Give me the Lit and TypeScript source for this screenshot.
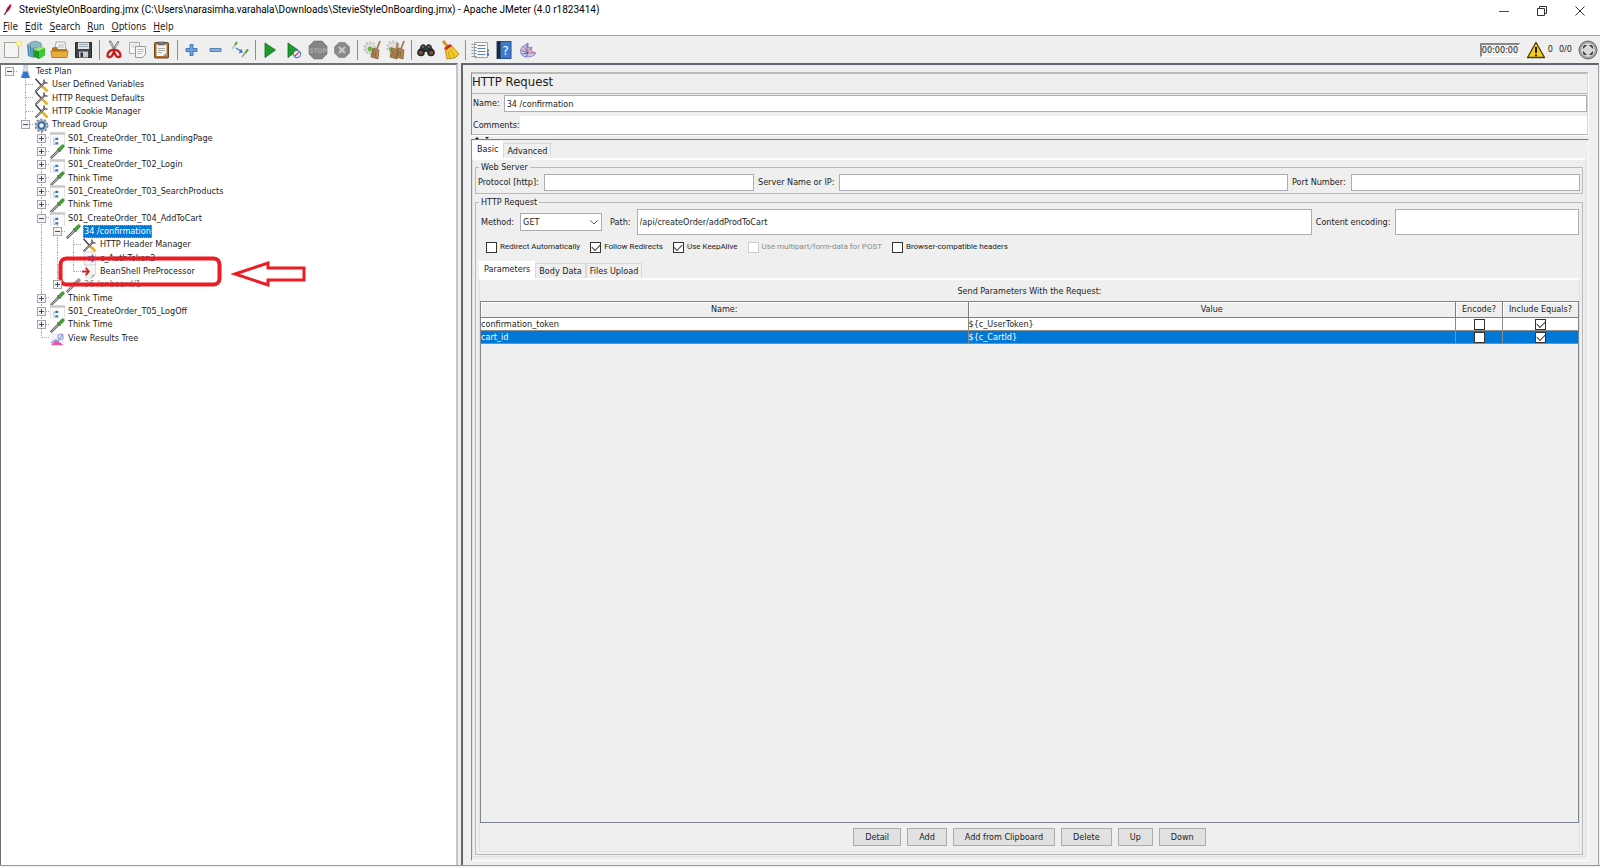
import { LitElement, html, css, svg, nothing } from "lit";
import { customElement, property } from "lit/decorators.js";
import { classMap } from "lit/directives/class-map.js";

const ICONS: Record<string, unknown> = {
  new: svg`<rect x="2.500" y="2.500" width="14" height="15" fill="#f4f4f2" stroke="#a3a3a0"/><circle cx="17" cy="3.500" r="3" fill="#f6e96a"/><circle cx="17" cy="3.500" r="1.300" fill="#fff"/>`,
  templates: svg`<path d="M1 4l6-3 7 1 3 4-8 3z" fill="#a9c8d2"/><path d="M1 4l1 12 6 2V8z" fill="#3f86a8"/><path d="M4 3l5-2 6 2v5H5z" fill="#8fb7c2" stroke="#5b8595" stroke-width=".6"/><path d="M3 5l1 11M6 6v11" stroke="#9fd0e0" stroke-width=".8"/><path d="M8 10l5-3 6 1v7l-6 4-5-2z" fill="#1f9a25"/><path d="M8 10l5-3 6 1-6 3z" fill="#a4ec70"/><path d="M13 11l6-3v7l-6 4z" fill="#3bc93b"/>`,
  open: svg`<path d="M6 2h9l1 8H5z" fill="#f5f5f5" stroke="#9a9a9a" stroke-width=".8"/><path d="M8 5h6M8 7h6" stroke="#bbb"/><path d="M2 8l2-1h3l1 2h9v8H2z" fill="#b5791c"/><path d="M1 11h17l-1 6.500H2z" fill="#e9ad3d" stroke="#a86f17" stroke-width=".8"/>`,
  save: svg`<path d="M1.500 2.500h16v15h-16z" fill="#3f454b" stroke="#24282c"/><rect x="4" y="2.500" width="11" height="6.500" fill="#dfe7ee"/><path d="M5 4.500h9M5 6.500h9" stroke="#8e98a2" stroke-width=".8"/><rect x="5" y="11.500" width="9" height="6" fill="#c9ced2"/><rect x="6.500" y="12.500" width="2.500" height="4.500" fill="#2b2f33"/>`,
  cut: svg`<path d="M5 1l5 9 1-1L7 1zM14 1L9 9l1 1 5-8z" fill="#d9d9d9" stroke="#707070" stroke-width=".8"/><path d="M9 10c-3 0-6 3-5.500 6 1 2 4 1 5-1l1.500-3 1.500 3c1 2 4 3 5 1 .5-3-2.500-6-5.500-6z" fill="none" stroke="#c81d1d" stroke-width="2.400"/>`,
  copy: svg`<path d="M1.500 2.500h10v11h-10z" fill="#f6f6f4" stroke="#aaa"/><path d="M3.500 5h6M3.500 7h6" stroke="#ccc"/><path d="M7.500 6.500h10v8l-3 3h-7z" fill="#f4f4f2" stroke="#999"/><path d="M9.500 9.500h6M9.500 11.500h6M9.500 13.500h4" stroke="#bbb"/>`,
  paste: svg`<rect x="2.500" y="2.500" width="14" height="15.500" rx="1" fill="#a8702a" stroke="#6d4414"/><rect x="4.500" y="4.500" width="10" height="11.500" fill="#f5f5f2"/><path d="M6 8.500h7M6 10.500h7M6 12.500h4" stroke="#a9a9a9"/><path d="M6.500 2h6v3h-6z" fill="#7d7d7d" stroke="#4f4f4f" stroke-width=".6"/><path d="M11 16l3.500-3.500V16z" fill="#999"/>`,
  plus: svg`<path d="M8 4.500h3v4h4v3h-4v4H8v-4H4v-3h4z" fill="#6ba0d8" stroke="#3c73b4" stroke-width=".9"/>`,
  minus: svg`<path d="M4 8.500h11v3H4z" fill="#84afdd" stroke="#4c7fba" stroke-width=".9"/>`,
  toggle: svg`<path d="M2 9l3-4" stroke="#b9bdb9" stroke-width="1.600"/><path d="M5 5l2-3" stroke="#58a348" stroke-width="2.200"/><path d="M12 17l3-4" stroke="#999f99" stroke-width="1.600"/><path d="M15 13l3-3.500" stroke="#58a348" stroke-width="2.200"/><path d="M6 8l6 4m-3 .7l3-.6-1-3" fill="none" stroke="#3e74c5" stroke-width="1.200"/>`,
  run: svg`<path d="M5 3l10.500 7L5 17.500z" fill="#1f9b2d" stroke="#0d6f1b" stroke-width=".8"/>`,
  runNow: svg`<path d="M4 3l10 7-10 7.500z" fill="#1f9b2d" stroke="#0d6f1b" stroke-width=".8"/><circle cx="13" cy="14" r="3.600" fill="#eef3fa" stroke="#4b84c9" stroke-width="1.200"/><path d="M10.800 16.200l4.400-4.400" stroke="#d22" stroke-width="1.200"/>`,
  stop: svg`<path d="M6 1h8l5 5v8l-5 5H6l-5-5V6z" fill="#848484" stroke="#6f6f6f" stroke-width=".6"/><text x="10" y="12.500" text-anchor="middle" font-size="6.500" font-weight="700" fill="#a9a9a9">STOP</text>`,
  shutdown: svg`<path d="M7 2.500h6l4.500 4.500v6L13 17.500H7L2.500 13V7z" fill="#8a8a8a" stroke="#767676" stroke-width=".6"/><path d="M7 7l6 6M13 7l-6 6" stroke="#c9c9c9" stroke-width="2"/>`,
  clear: svg`<circle cx="8" cy="8" r="5.500" fill="#dedede" stroke="#c4c4c4" stroke-dasharray="2 1.500" stroke-width="2.400"/><circle cx="8" cy="9" r="2.400" fill="#67bd2e"/><path d="M18 1l-3 8" stroke="#a77b47" stroke-width="1.800"/><path d="M11 8l6 2-1 9-7-2z" fill="#b08552" stroke="#7b5730" stroke-width=".7"/><path d="M12 10l-1 6M14 11l-1 6" stroke="#7b5730" stroke-width=".6"/>`,
  clearAll: svg`<circle cx="7" cy="7" r="5.500" fill="#dedede" stroke="#c4c4c4" stroke-dasharray="2 1.500" stroke-width="2.400"/><circle cx="5" cy="9" r="2" fill="#67bd2e"/><path d="M12 3l-2 7M18 1l-3 8" stroke="#a77b47" stroke-width="1.800"/><path d="M6 8l6 2-1 9-7-2zM12 8l6 2-1 9-7-2z" fill="#b08552" stroke="#7b5730" stroke-width=".7"/><path d="M7 10l-1 6M9 11l-1 6M13 10l-1 6M15 11l-1 6" stroke="#7b5730" stroke-width=".6"/>`,
  find: svg`<path d="M5 5l3-1 2 2 2-2 3 1 3 7H2z" fill="#33373a"/><circle cx="5" cy="12.500" r="3.800" fill="#24272a"/><circle cx="15" cy="12.500" r="3.800" fill="#24272a"/><circle cx="4.800" cy="12.800" r="2" fill="#8a4b34"/><circle cx="15.200" cy="12.800" r="2" fill="#8a4b34"/><path d="M6 7h2M12 7h2" stroke="#888"/>`,
  broom: svg`<path d="M3 1l5 6" stroke="#d6932a" stroke-width="2.800"/><path d="M5 9l6-4 8 9-4 4-8 1z" fill="#f0c92b" stroke="#a77d12" stroke-width=".8"/><path d="M4 8l6-4 2 2-6 4z" fill="#cf2b20"/><path d="M8 11l2 7M10 9l5 8" stroke="#b78f1a" stroke-width=".7"/>`,
  functions: svg`<path d="M4.500 2.500h13v15h-13z" fill="#fafafa" stroke="#a2a2a2"/><path d="M7.500 5.500h8M7.500 8.500h8M7.500 11.500h8M7.500 14.500h8" stroke="#5c86b9" stroke-width="1.200"/><path d="M1.500 4.500h5M1.500 7.500h5M1.500 10.500h5M1.500 13.500h5M1.500 16.500h5" stroke="#8a8a8a" stroke-dasharray="2 1"/><path d="M18 9v3" stroke="#3a9f3a" stroke-width="1.500"/><path d="M18 13v3" stroke="#2a5fc2" stroke-width="1.500"/>`,
  help: svg`<rect x="3" y="1.500" width="14" height="17" fill="#3c7bd0" stroke="#27518e"/><rect x="3" y="1.500" width="3.500" height="17" fill="#23272f"/><text x="11.500" y="15" text-anchor="middle" font-size="13" fill="#fff">?</text>`,
  feather: svg`<path d="M3 9c-2 4 1 8 6 8 4 0 7-1 9-4l-5-2 1-4-4 1V3L6 6c-2 0-2 1-3 3z" fill="#c3cbea" stroke="#6a78c0" stroke-width=".8"/><path d="M5 6l5 7M3 10l7 3M17 13l-7 0M13 8l-4 5" stroke="#d25b63" stroke-width=".9"/><path d="M9 4v9M4 14l6-1M8 17l2-4" stroke="#4557b0" stroke-width=".8"/>`,
  warning: svg`<path d="M10 2.500l8.500 15h-17z" fill="#f6cf10" stroke="#4a3b08" stroke-width="1.300" stroke-linejoin="round"/><path d="M10 7v6M10 14.500v1.800" stroke="#1c1600" stroke-width="2"/>`,
  expand: svg`<circle cx="10" cy="10" r="9" fill="#a4a4a4" stroke="#6a6a6a"/><circle cx="10" cy="10" r="6.800" fill="#d9d9d9"/><path d="M5 9V6.500L6.500 5H9zM11 5h2.500L15 6.500V9zM15 11v2.500L13.500 15H11zM9 15H6.500L5 13.500V11z" fill="#3d3d3d"/>`,
  app: svg`<path d="M15 1c2 3-2 10-6 13l-3 1c0-5 5-12 9-14z" fill="#c9202c"/><path d="M7 14l-3 5" stroke="#7b1f2b" stroke-width="1.800"/><path d="M14 3L8 13" stroke="#5f1546" stroke-width="1.200"/>`,
  flask: svg`<path d="M8 1h4v6l4 11H4L8 7z" fill="#dfe9f5" stroke="#8fa3ba"/><path d="M7.500 10h5l3 8.500h-11z" fill="#2f74d0"/>`,
  tools: svg`<path d="M2 1l8 9" stroke="#4c4c4c" stroke-width="2.200"/><path d="M10 10l8 8" stroke="#e2b22a" stroke-width="3.600"/><path d="M2 18L14 6" stroke="#5b5b5b" stroke-width="2.600"/><path d="M3 17L13 7" stroke="#c4c4c4" stroke-width="1"/><path d="M13 2l1 4 4 1" fill="none" stroke="#686868" stroke-width="2.200"/>`,
  gear: svg`<circle cx="10" cy="10" r="8" fill="#b9bec4" stroke="#8a8f96" stroke-width="2.600" stroke-dasharray="3 2"/><circle cx="10" cy="10" r="4.300" fill="#eef4fb" stroke="#3467a8" stroke-width="2.600"/>`,
  controller: svg`<rect x="0" y="2" width="20" height="18" fill="#fbfbfb"/><path d="M.5 20V2h19v18" fill="none" stroke="#d5d5d5"/><path d="M0 2h20v3H0z" fill="#c9c9c9"/><path d="M5 9v9h2M5 12h2" fill="none" stroke="#9ab5d8"/><path d="M7 9h4v3H7zM7 15h4v3H7z" fill="#3a78c8"/>`,
  dropper: svg`<path d="M1 19L12 8" stroke="#6a6f6a" stroke-width="3.400"/><path d="M2 18l9-9" stroke="#c8cdc8" stroke-width="1.200"/><path d="M10 6l4 4" stroke="#3e463e" stroke-width="2.200"/><path d="M13 7l4-4" stroke="#4c9a3d" stroke-width="5" stroke-linecap="round"/>`,
  dropperOff: svg`<path d="M1 19L12 8" stroke="#7c7c7c" stroke-width="3.400"/><path d="M2 18l9-9" stroke="#c8c8c8" stroke-width="1.200"/><path d="M10 6l4 4" stroke="#555" stroke-width="2.200"/><path d="M13 7l4-4" stroke="#9a9a9a" stroke-width="5" stroke-linecap="round"/>`,
  extractor: svg`<path d="M3 1h11l4 4v14H3z" fill="#f5f5f5" stroke="#c9c9c9"/><path d="M8 7h5V4l6 6-6 6v-3H8z" fill="#2d6cc4"/>`,
  preproc: svg`<path d="M5 1h13v13l-5 5H5z" fill="#f4f4f4" stroke="#d2d2d2"/><path d="M13 19v-4l5-1z" fill="#a9a9a9"/><path d="M0 10h8M5 5l4 5-4 5" fill="none" stroke="#cf2532" stroke-width="2.600"/>`,
  results: svg`<rect x="1" y="3" width="18" height="16" fill="#f5f1fa"/><path d="M1 19l7-7 5 3 5 4z" fill="#e55aa6"/><path d="M1 16l6-4 4 1 6-9" fill="none" stroke="#8a9ae0" stroke-width="1.600"/><circle cx="14" cy="8" r="3.500" fill="none" stroke="#9aa6dd" stroke-width="1.600"/>`,
  minimize: svg`<path d="M5 10.500h10" stroke="#444"/>`,
  restore: svg`<path d="M5.500 7.500h7v7h-7zM7.500 7.500v-2h7v7h-2" fill="none" stroke="#333"/>`,
  close: svg`<path d="M5.500 5.500l9 9M14.500 5.500l-9 9" stroke="#333"/>`,
  chevron: svg`<path d="M1 6l9 9 9-9" fill="none" stroke="#555" stroke-width="2.400"/>`,
};

@customElement("jm-icon")
class JmIcon extends LitElement {
  @property() name = "";
  static styles = css`
    :host { display: block; width: 20px; height: 20px; font-family: "DejaVu Sans Condensed", sans-serif; }
    svg { display: block; width: 100%; height: 100%; }
  `;
  render() {
    return html`<svg viewBox="0 0 20 20" aria-hidden="true">${ICONS[this.name] ?? nothing}</svg>`;
  }
}

interface Node { level: number; icon: string; text: string; toggle?: "+" | "-"; selected?: boolean; off?: boolean; }

const NODES: Node[] = [
  { level: 0, icon: "flask", text: "Test Plan", toggle: "-" },
  { level: 1, icon: "tools", text: "User Defined Variables" },
  { level: 1, icon: "tools", text: "HTTP Request Defaults" },
  { level: 1, icon: "tools", text: "HTTP Cookie Manager" },
  { level: 1, icon: "gear", text: "Thread Group", toggle: "-" },
  { level: 2, icon: "controller", text: "S01_CreateOrder_T01_LandingPage", toggle: "+" },
  { level: 2, icon: "dropper", text: "Think Time", toggle: "+" },
  { level: 2, icon: "controller", text: "S01_CreateOrder_T02_Login", toggle: "+" },
  { level: 2, icon: "dropper", text: "Think Time", toggle: "+" },
  { level: 2, icon: "controller", text: "S01_CreateOrder_T03_SearchProducts", toggle: "+" },
  { level: 2, icon: "dropper", text: "Think Time", toggle: "+" },
  { level: 2, icon: "controller", text: "S01_CreateOrder_T04_AddToCart", toggle: "-" },
  { level: 3, icon: "dropper", text: "34 /confirmation", toggle: "-", selected: true },
  { level: 4, icon: "tools", text: "HTTP Header Manager" },
  { level: 4, icon: "extractor", text: "c_AuthToken2" },
  { level: 4, icon: "preproc", text: "BeanShell PreProcessor" },
  { level: 3, icon: "dropperOff", text: "36 /onboard/1", toggle: "+", off: true },
  { level: 2, icon: "dropper", text: "Think Time", toggle: "+" },
  { level: 2, icon: "controller", text: "S01_CreateOrder_T05_LogOff", toggle: "+" },
  { level: 2, icon: "dropper", text: "Think Time", toggle: "+" },
  { level: 2, icon: "results", text: "View Results Tree" },
];

/** True when a later row continues the branch drawn in the given column. */
const continues = (row: number, column: number) => {
  for (let i = row + 1; i < NODES.length && NODES[i].level >= column; i++) {
    if (NODES[i].level === column) return true;
  }
  return false;
};

@customElement("jm-tree")
class JmTree extends LitElement {
  static styles = css`
    :host { display: block; position: relative; background: #fff; overflow: hidden; }
    .tree { list-style: none; margin: 0; padding: 0; display: grid; grid-auto-rows: 1fr; height: 280px; }
    .row { display: flex; align-items: stretch; min-height: 0; white-space: nowrap; }
    .cell { width: 16px; display: grid; grid-template: 1fr 1fr / 1fr 1fr; flex: none; }
    .up { grid-area: 1 / 1; border-right: 1px dotted #a8a8a8; margin-right: -1px; }
    .down { grid-area: 2 / 1; border-right: 1px dotted #a8a8a8; margin-right: -1px; }
    .dash { grid-area: 1 / 2; border-bottom: 1px dotted #a8a8a8; }
    .toggle {
      grid-area: 1 / 1 / 3 / 3; place-self: center; z-index: 1; box-sizing: border-box; width: 9px; height: 9px; padding: 0; margin: 0;
      border: 1px solid #a6a6a6; background: linear-gradient(#33507f, #33507f) center / 5px 1px no-repeat #f4f4f4;
    }
    .plus { background: linear-gradient(#33507f, #33507f) center / 5px 1px no-repeat, linear-gradient(#33507f, #33507f) center / 1px 5px no-repeat #f4f4f4; }
    jm-icon { width: 17px; height: 15px; margin-right: 1px; align-self: center; flex: none; }
    .label { padding: 0 1px; line-height: 13px; align-self: center; }
    .selected { background: #0078d7; color: #fff; outline: 1px dotted #e0935a; outline-offset: -1px; }
    .off { color: #777; }
    .markup { position: absolute; left: 56px; top: 189px; width: 252px; height: 36px; pointer-events: none; }
  `;
  render() {
    return html`<ul class="tree" role="tree">${NODES.map((n, i) => html`
      <li class="row" role="treeitem" aria-level=${n.level + 1} aria-selected=${n.selected ? "true" : "false"}>
        ${Array.from({ length: n.level + 1 }, (_, c) => {
          const own = c === n.level;
          const below = c > 0 && continues(i, c);
          return html`<span class="cell">
            ${c > 0 && (own || below) ? html`<span class="up"></span>` : nothing}
            ${below ? html`<span class="down"></span>` : nothing}
            ${own ? html`<span class="dash"></span>` : nothing}
            ${own && n.toggle ? html`<button class=${classMap({ toggle: true, plus: n.toggle === "+" })} aria-label=${n.toggle === "+" ? "Expand" : "Collapse"}></button>` : nothing}
          </span>`;
        })}<jm-icon name=${n.icon}></jm-icon><span class=${classMap({ label: true, selected: !!n.selected, off: !!n.off })}>${n.text}</span>
      </li>`)}</ul>
      <svg class="markup" viewBox="0 0 252 36" fill="none" stroke="#ec1c24" stroke-width="3">
        <rect x="3.500" y="4.500" width="159" height="26" rx="6" stroke-width="4"/>
        <path d="M178 20l33-11v5h36v12h-36v5z"/>
      </svg>`;
  }
}

const TOOLBAR: [string, string][][] = [
  [["new", "New"], ["templates", "Templates"], ["open", "Open"], ["save", "Save"]],
  [["cut", "Cut"], ["copy", "Copy"], ["paste", "Paste"]],
  [["plus", "Expand All"], ["minus", "Collapse All"], ["toggle", "Toggle"]],
  [["run", "Start"], ["runNow", "Start no pauses"], ["stop", "Stop"], ["shutdown", "Shutdown"]],
  [["clear", "Clear"], ["clearAll", "Clear All"]],
  [["find", "Search"], ["broom", "Reset Search"]],
  [["functions", "Function Helper"], ["help", "Help"], ["feather", "What's new"]],
];

const OPTIONS = [
  { id: "auto", text: "Redirect Automatically", on: false, disabled: false },
  { id: "follow", text: "Follow Redirects", on: true, disabled: false },
  { id: "keep", text: "Use KeepAlive", on: true, disabled: false },
  { id: "multi", text: "Use multipart/form-data for POST", on: false, disabled: true },
  { id: "browser", text: "Browser-compatible headers", on: false, disabled: false },
];

const PARAMS = [
  { name: "confirmation_token", value: "${c_UserToken}", selected: false },
  { name: "cart_id", value: "${c_CartId}", selected: true },
];

@customElement("app-root")
class AppRoot extends LitElement {
  static styles = css`
    :host {
      display: flex; flex-direction: column; min-height: 100vh; box-sizing: border-box;
      font: 9px/11px "DejaVu Sans Condensed", "Noto Sans", sans-serif; color: #1c1c1c; background: #efefef;
    }
    * { box-sizing: border-box; }
    button, input, select { font: inherit; color: inherit; margin: 0; border-radius: 0; }
    .titlebar { display: flex; align-items: center; height: 19px; background: #fff; padding: 0 10px 0 2px; }
    .titlebar .logo { width: 12px; height: 13px; }
    .title { margin: 0 auto 0 5px; font: 10px/14px Roboto, sans-serif; color: #000; }
    .windows { display: flex; gap: 18px; }
    .winbtn { border: 0; padding: 0; background: none; width: 20px; height: 17px; display: grid; place-items: center; }
    .winbtn jm-icon { width: 20px; height: 20px; }
    .menu { display: flex; gap: 7px; height: 16px; align-items: center; background: #fff; padding: 0 3px; font-size: 10px; }
    .menu button { border: 0; background: none; padding: 0; line-height: 14px; }
    .menu u { text-underline-offset: 1px; }
    .toolbar { display: flex; align-items: center; height: 28px; border-top: 1px solid #a5a5a5; padding: 0 2px 0 0; }
    .group { display: flex; }
    .group + .group::before { content: ""; width: 1px; height: 20px; margin: 0 2px 0 3px; background: #8d8d8d; align-self: center; }
    .tool { width: 24px; height: 24px; padding: 0; border: 0; background: none; display: grid; place-items: center; }
    .tool jm-icon { width: 20px; height: 20px; }
    .status { margin-left: auto; display: flex; align-items: center; gap: 6px; }
    .timer { border: 1px solid #fff; border-top: 2px solid #8a8a8a; border-left: 2px solid #8a8a8a; height: 14px; line-height: 11px; width: 40px; }
    .status jm-icon { width: 20px; height: 20px; }
    .count { display: flex; gap: 2px; align-items: center; }
    .main { flex: 1; display: flex; min-height: 0; border-bottom: 1px solid #9b9b9b; margin-bottom: 1px; }
    jm-tree { flex: 0 0 auto; width: 458px; border: solid #6d727a; border-width: 2px 2px 0 1px; border-right-color: #c4c6ca; }
    .editor { flex: 1; min-width: 0; margin-left: 3px; border: solid #636870; border-width: 2px 1px 0 2px; border-right-color: #9da0a6; padding: 7px 9px 4px 8px; margin-right: 1px; display: flex; flex-direction: column; }
    .head { border: solid; border-width: 2px 1px 1px 1px; border-color: #bababa #d5d5d5 #b2b2b2 #8e8e8e; margin-right: 1px; box-shadow: 1px 1px #fff; }
    h1 { font: 13px/15px "DejaVu Sans Condensed", sans-serif; margin: 0 0 1px; border-bottom: 1px solid #b6b6b6; height: 20px; }
    .line { display: flex; align-items: center; }
    .name { gap: 4px; padding-left: 1px; margin-bottom: 4px; }
    .comments { padding-left: 1px; }
    .text { border: 1px solid #abadb3; background: #fff; height: 17px; padding: 0 2px; flex: 1; min-width: 0; outline: 0; }
    .plain { border: 0; height: 18px; }
    .split { height: 4px; display: flex; gap: 6px; padding-left: 4px; align-items: end; }
    .split i { width: 4px; height: 2px; background: #111; clip-path: polygon(50% 0, 100% 100%, 0 100%); }
    .split i + i { clip-path: polygon(0 0, 100% 0, 50% 100%); }
    .lower { flex: 1; display: flex; flex-direction: column; border: solid; border-width: 1px 1px 1px 1px; border-color: #7c7c7c #f8f8f8 #fff #8e8e8e; padding: 1px 2px 3px 0; }
    .tabs { display: flex; align-items: flex-end; height: 17px; }
    .tab { border: 1px solid #d9d9d9; border-bottom: 0; background: #efefef; padding: 0 3px; height: 15px; line-height: 13px; }
    .tab.on { background: #fff; border-color: #fff; height: 17px; padding: 0 4px 2px; line-height: 14px; }
    .pane { border: solid #e0e0e0; border-width: 2px 1px 1px; border-top-color: #fff; flex: 1; display: flex; flex-direction: column; padding: 2px 2px 1px; gap: 3px; }
    fieldset { margin: 0; border: 1px solid #b9b9b9; padding: 0 2px 2px 3px; min-width: 0; }
    legend { padding: 0 2px; line-height: 11px; }
    .server { display: flex; align-items: center; gap: 4px; padding: 1px 0 0; margin-left: -1px; }
    .field { display: flex; align-items: center; gap: 5px; min-width: 0; }
    .protocol { flex: 277 1 0; }
    .host { flex: 532 1 0; }
    .port { flex: 289 1 0; }
    .request { flex: 1; display: flex; flex-direction: column; }
    .top { display: flex; align-items: center; gap: 8px; padding: 1px 1px 0 0; }
    .top .text { height: 26px; }
    .method { padding-left: 2px; gap: 6px; }
    .pick { display: grid; align-items: center; }
    .pick select { grid-area: 1 / 1; appearance: none; border: 1px solid #acacac; background: #fff; height: 18px; width: 82px; padding: 0 2px; }
    .pick jm-icon { grid-area: 1 / 1; width: 8px; height: 8px; justify-self: end; margin-right: 4px; pointer-events: none; }
    .path { flex: 701 1 0; gap: 6px; }
    .enc { flex: 263 1 0; margin-left: -4px; }
    .options { display: flex; gap: 10px; padding: 6px 7px 8px; font: 8px/12px Roboto, sans-serif; }
    .options label { display: flex; align-items: center; gap: 3px; }
    .options .dim { color: #8a8a8a; }
    .box { appearance: none; width: 11px; height: 11px; border: 1px solid #333; background: #fff; display: grid; place-items: center; flex: none; }
    .box:disabled { border-color: #ccc; }
    .box:checked::before { content: ""; width: 7px; height: 4px; border: solid #333; border-width: 0 0 1px 1px; transform: translateY(-1px) rotate(-45deg); }
    .params { flex: 1; display: flex; flex-direction: column; border: solid #e0e0e0; border-width: 2px 1px 1px; border-top-color: #fff; }
    .caption { text-align: center; margin: 0; padding: 6px 0 4px; }
    .grid { flex: 1; border: 1px solid #7f8590; }
    table { width: 100%; border-collapse: separate; border-spacing: 0; table-layout: fixed; }
    th { font-weight: 400; height: 16px; padding: 0; border: solid #7e7e7e; border-width: 0 1px 1px 0; box-shadow: inset 1px 1px #fff; }
    td { height: 13px; padding: 0; line-height: 12px; border: solid #8b8b8b; border-width: 0 1px 1px 0; background: #fff; }
    th:last-child, td:last-child { border-right: 0; }
    .picked td { background: #0078d7; color: #fff; }
    td .box { margin: 0 auto; }
    .narrow { width: 47px; }
    .wide { width: 75px; }
    .actions { display: flex; justify-content: center; gap: 6px; padding: 5px 0; }
    .actions button { background: #e1e1e1; border: 1px solid #adadad; padding: 0 11px; height: 18px; line-height: 14px; }
  `;

  render() {
    return html`
      <header class="titlebar">
        <jm-icon class="logo" name="app"></jm-icon>
        <span class="title">StevieStyleOnBoarding.jmx (C:\\Users\\narasimha.varahala\\Downloads\\StevieStyleOnBoarding.jmx) - Apache JMeter (4.0 r1823414)</span>
        <div class="windows">${["minimize", "restore", "close"].map((n) => html`<button class="winbtn" aria-label=${n}><jm-icon name=${n}></jm-icon></button>`)}</div>
      </header>
      <nav class="menu">${["File", "Edit", "Search", "Run", "Options", "Help"].map((m) => html`<button><u>${m[0]}</u>${m.slice(1)}</button>`)}</nav>
      <div class="toolbar">
        ${TOOLBAR.map((g) => html`<div class="group">${g.map(([icon, label]) => html`<button class="tool" aria-label=${label}><jm-icon name=${icon}></jm-icon></button>`)}</div>`)}
        <div class="status">
          <span class="timer">00:00:00</span>
          <span class="count"><jm-icon name="warning"></jm-icon><span>0</span></span>
          <span>0/0</span>
          <jm-icon name="expand"></jm-icon>
        </div>
      </div>
      <main class="main">
        <jm-tree></jm-tree>
        <section class="editor">
          <div class="head">
            <h1>HTTP Request</h1>
            <div class="line name"><label for="name">Name:</label><input class="text" id="name" value="34 /confirmation"></div>
            <div class="line comments"><label for="comments">Comments:</label><input class="text plain" id="comments"></div>
          </div>
          <div class="split"><i></i><i></i></div>
          <div class="lower">
            <div class="tabs" role="tablist"><button class="tab on" role="tab">Basic</button><button class="tab" role="tab">Advanced</button></div>
            <div class="pane">
              <fieldset>
                <legend>Web Server</legend>
                <div class="server">
                  <div class="field protocol"><label for="protocol">Protocol [http]:</label><input class="text" id="protocol"></div>
                  <div class="field host"><label for="host">Server Name or IP:</label><input class="text" id="host"></div>
                  <div class="field port"><label for="port">Port Number:</label><input class="text" id="port"></div>
                </div>
              </fieldset>
              <fieldset class="request">
                <legend>HTTP Request</legend>
                <div class="top">
                  <div class="field method"><label for="method">Method:</label><span class="pick"><select id="method"><option>GET</option><option>POST</option></select><jm-icon name="chevron"></jm-icon></span></div>
                  <div class="field path"><label for="path">Path:</label><input class="text" id="path" value="/api/createOrder/addProdToCart"></div>
                  <div class="field enc"><label for="enc">Content encoding:</label><input class="text" id="enc"></div>
                </div>
                <div class="options">${OPTIONS.map((o) => html`<label class=${classMap({ dim: o.disabled })} for=${o.id}><input class="box" type="checkbox" id=${o.id} ?checked=${o.on} ?disabled=${o.disabled}>${o.text}</label>`)}</div>
                <div class="tabs" role="tablist"><button class="tab on" role="tab">Parameters</button><button class="tab" role="tab">Body Data</button><button class="tab" role="tab">Files Upload</button></div>
                <div class="params">
                  <p class="caption" id="caption">Send Parameters With the Request:</p>
                  <div class="grid">
                    <table aria-labelledby="caption">
                      <colgroup><col><col><col class="narrow"><col class="wide"></colgroup>
                      <thead><tr><th>Name:</th><th>Value</th><th>Encode?</th><th>Include Equals?</th></tr></thead>
                      <tbody>${PARAMS.map((p) => html`<tr class=${classMap({ picked: p.selected })}>
                        <td>${p.name}</td><td>${p.value}</td>
                        <td><input class="box" type="checkbox" aria-label="Encode"></td>
                        <td><input class="box" type="checkbox" aria-label="Include equals" checked></td>
                      </tr>`)}</tbody>
                    </table>
                  </div>
                  <div class="actions">${["Detail", "Add", "Add from Clipboard", "Delete", "Up", "Down"].map((b) => html`<button>${b}</button>`)}</div>
                </div>
              </fieldset>
            </div>
          </div>
        </section>
      </main>
    `;
  }
}
